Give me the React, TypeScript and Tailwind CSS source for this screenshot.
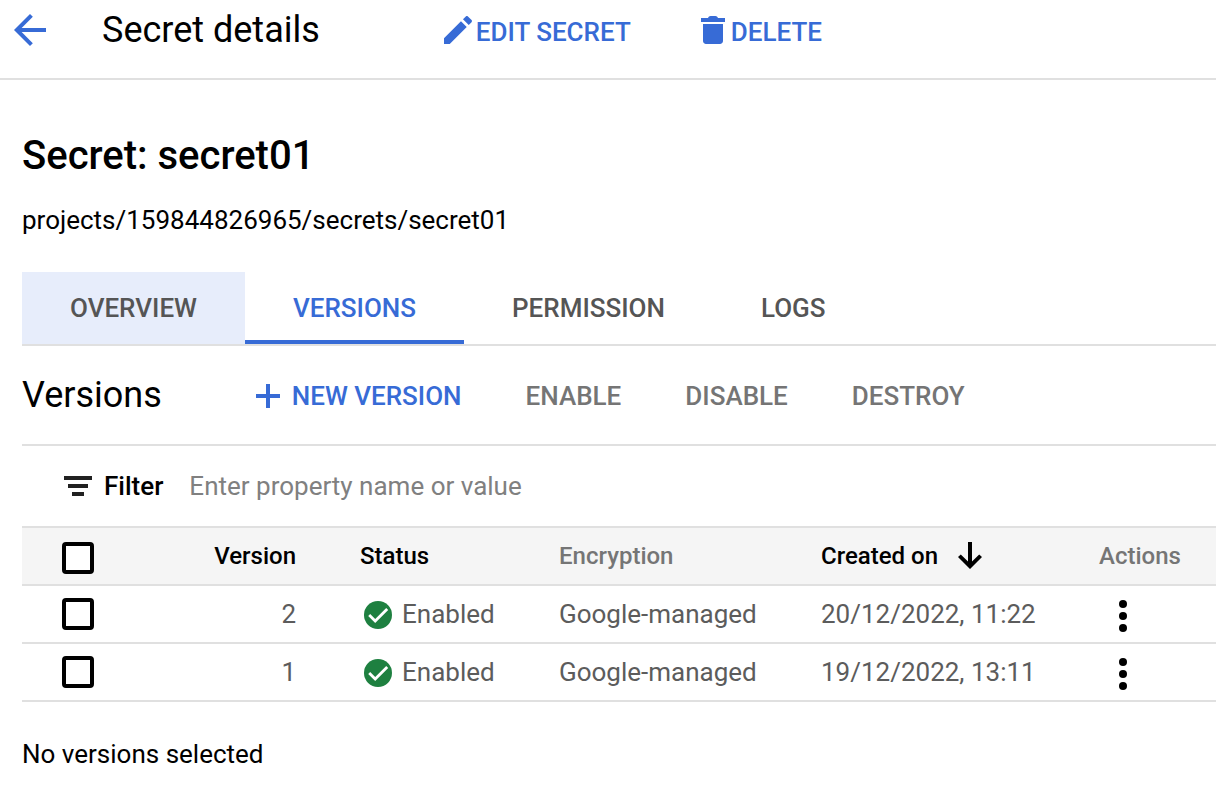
import React from 'react';

const tabs = [
  { name: 'OVERVIEW', style: 'bg-[#e7edfb] text-[#555]' },
  { name: 'VERSIONS', style: 'border-b-4 border-[#376bd6] pt-1 text-[#376bd6]' },
  { name: 'PERMISSION', style: 'text-[#555]' },
  { name: 'LOGS', style: 'text-[#555]' },
];

const versions = [
  { version: 2, status: 'Enabled', encryption: 'Google-managed', created: '20/12/2022, 11:22' },
  { version: 1, status: 'Enabled', encryption: 'Google-managed', created: '19/12/2022, 13:11' },
];

const bulkActions = ['ENABLE', 'DISABLE', 'DESTROY'];

const Checkbox = ({ label }: { label: string }) => (
  <input
    type="checkbox"
    aria-label={label}
    className="block size-8 appearance-none rounded-sm border-4 border-black bg-white checked:bg-black"
  />
);

const Header = () => (
  <header className="flex h-20 items-center border-b-2 border-[#e0e0e0] pb-[18px] pl-3.5">
    <a href="#secrets" aria-label="Back to secrets" className="text-[#376bd6]">
      <svg className="size-8" viewBox="4 4 16 16" fill="currentColor">
        <path d="M20 11H7.83l5.59-5.59L12 4l-8 8 8 8 1.41-1.41L7.83 13H20v-2z" />
      </svg>
    </a>
    <div className="ml-14 text-4xl leading-12">Secret details</div>
    <div className="ml-31 flex gap-17 pt-1 font-medium text-[#376bd6]">
      <button className="flex items-start gap-1 leading-8">
        <svg className="size-7" viewBox="2 2 14 14" fill="currentColor">
          <path d="M2 13.12l8.49-8.488 2.878 2.878L4.878 16H2v-2.88zm13.776-8.017L14.37 6.507 11.493 3.63l1.404-1.406a.764.764 0 0 1 1.081 0l1.798 1.798c.298.298.298.782 0 1.08z" />
        </svg>
        EDIT SECRET
      </button>
      <button className="flex items-start gap-1 leading-8">
        <svg className="size-7" viewBox="-1 0 14 14" fill="currentColor">
          <path d="M0 1h3.500C3.700 .4 4.200 0 4.800 0h2.400c.6 0 1.100.4 1.300 1H12v2H0V1zM1 4h10v8.500c0 .83-.67 1.500-1.500 1.500h-7C1.670 14 1 13.330 1 12.500V4z" />
        </svg>
        DELETE
      </button>
    </div>
  </header>
);

const Toolbar = () => (
  <div className="flex h-25 items-center border-b-2 border-[#e0e0e0]">
    <h2 className="text-4xl">Versions</h2>
    <div className="ml-[94px] flex gap-16 pt-0.5 font-medium text-[#757575]">
      <button className="flex items-center gap-3 text-[#376bd6]">
        <svg className="size-6" viewBox="0 0 12 12" fill="currentColor">
          <path d="M5 0h2v5h5v2H7v5H5V7H0V5h5V0z" />
        </svg>
        NEW VERSION
      </button>
      {bulkActions.map((action) => (
        <button key={action}>{action}</button>
      ))}
    </div>
  </div>
);

const VersionsTable = () => (
  <table className="w-full table-fixed border-separate border-spacing-0 text-left">
    <colgroup>
      <col className="w-[138px]" />
      <col className="w-[168px]" />
      <col className="w-[199px]" />
      <col className="w-[262px]" />
      <col className="w-[278px]" />
      <col />
    </colgroup>
    <thead>
      <tr className="h-15 bg-[#f5f5f5] text-2xl *:border-y-2 *:border-[#e0e0e0] *:p-0 *:font-medium">
        <th>
          <div className="pt-1 pl-10">
            <Checkbox label="Select all versions" />
          </div>
        </th>
        <th>
          <div className="pr-8 text-right">Version</div>
        </th>
        <th>
          <div className="pl-8">Status</div>
        </th>
        <th>
          <div className="pl-8 text-[#757575]">Encryption</div>
        </th>
        <th>
          <button className="flex items-center gap-5 pl-8">
            Created on
            <svg className="h-7 w-6" viewBox="0 0 24 28" fill="currentColor">
              <path d="M10 0h4v19.500l7.200-7.100L24 15.100 12 27 0 15.100l2.800-2.700L10 19.500V0z" />
            </svg>
          </button>
        </th>
        <th>
          <div className="pl-8 text-[#757575]">Actions</div>
        </th>
      </tr>
    </thead>
    <tbody className="text-[#5c5c5c]">
      {versions.map((item) => (
        <tr key={item.version} className="h-[58px] *:border-b-2 *:border-[#e0e0e0] *:p-0">
          <td>
            <div className="pl-10">
              <Checkbox label={`Select version ${item.version}`} />
            </div>
          </td>
          <td>
            <div className="pr-8 text-right">{item.version}</div>
          </td>
          <td>
            <div className="flex items-center gap-1.5 pl-8">
              <svg className="size-9" viewBox="0 0 36 36">
                <circle cx="18" cy="19" r="14" fill="#1e8040" />
                <path d="M9.200 19l6 6 12-12" fill="none" stroke="#fff" strokeWidth="2.800" />
              </svg>
              {item.status}
            </div>
          </td>
          <td>
            <div className="pl-8">{item.encryption}</div>
          </td>
          <td>
            <div className="pl-8">{item.created}</div>
          </td>
          <td>
            <button
              aria-label={`Actions for version ${item.version}`}
              className="ml-13 block pt-1 text-black"
            >
              <svg className="h-8 w-2" viewBox="0 0 8 32" fill="currentColor">
                <circle cx="4" cy="4" r="4" />
                <circle cx="4" cy="16" r="4" />
                <circle cx="4" cy="28" r="4" />
              </svg>
            </button>
          </td>
        </tr>
      ))}
    </tbody>
  </table>
);

const App = () => {
  return (
    <div className="min-h-screen bg-white font-[Roboto,sans-serif] text-[26px] leading-8 text-black">
      <Header />
      <main className="pt-13 pl-[22px]">
        <h1 className="text-[40px] leading-12 font-medium">Secret: secret01</h1>
        <p className="mt-6">projects/159844826965/secrets/secret01</p>

        <nav className="mt-9 flex border-b-2 border-[#e0e0e0] font-medium">
          {tabs.map((tab) => (
            <button key={tab.name} className={`h-18 px-12 ${tab.style}`}>
              {tab.name}
            </button>
          ))}
        </nav>

        <Toolbar />

        <div className="flex h-20 items-center pl-[42px]">
          <svg className="h-5 w-7" viewBox="0 0 14 10" fill="#212121">
            <path d="M0 0h14v2H0V0zM2 4h10v2H2V4zM4 8h6v2H4V8z" />
          </svg>
          <label htmlFor="filter" className="ml-3 font-medium">
            Filter
          </label>
          <input
            id="filter"
            type="text"
            placeholder="Enter property name or value"
            className="ml-6.5 min-w-0 flex-1 outline-none placeholder:text-[#808080]"
          />
        </div>

        <VersionsTable />

        <p className="mt-9">No versions selected</p>
      </main>
    </div>
  );
};

export default App;
